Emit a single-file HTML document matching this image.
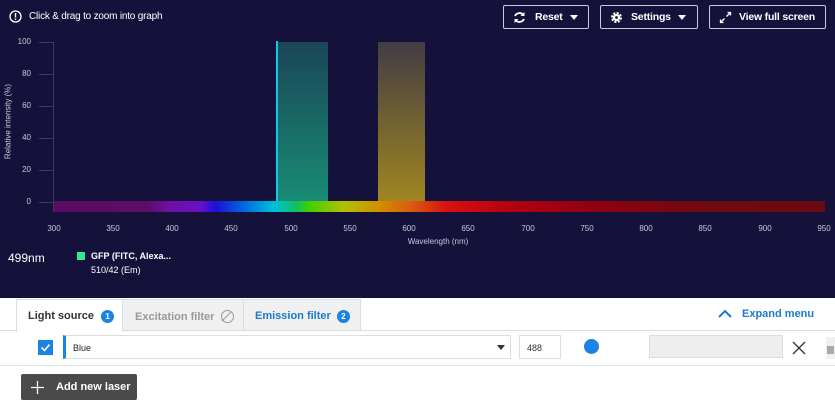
<!DOCTYPE html>
<html><head><style>
*{margin:0;padding:0;box-sizing:border-box}
body{width:835px;height:400px;overflow:hidden;background:#fff;font-family:"Liberation Sans",sans-serif;position:relative}
.dark{position:absolute;left:0;top:0;width:835px;height:298px;background:#14123a}
.abs{position:absolute}
.btn{position:absolute;top:5px;height:24px;border:1px solid #c8c8d8;border-radius:2px;color:#fff;font-size:10.5px;font-weight:bold;display:flex;align-items:center;padding-left:9px;white-space:nowrap;letter-spacing:-0.2px}
.yl{position:absolute;left:0;width:31px;text-align:right;color:#c8c8d8;font-size:8px}
.tick{position:absolute;left:39px;width:14px;height:1px;background:#3a3866}
.xl{position:absolute;top:224px;color:#c8c8d8;font-size:8px;width:30px;text-align:center}
</style></head><body>
<div class="dark"></div>
<svg class="abs" style="left:9px;top:10px" width="13" height="13" viewBox="0 0 13 13"><circle cx="6.5" cy="6.5" r="5.5" fill="none" stroke="#fff" stroke-width="1.3"/><rect x="5.8" y="3" width="1.4" height="4.5" fill="#fff"/><rect x="5.8" y="8.5" width="1.4" height="1.4" fill="#fff"/></svg>
<div class="abs" style="left:29px;top:11px;color:#fff;font-size:10px;letter-spacing:-0.2px">Click &amp; drag to zoom into graph</div>
<div class="btn" style="left:503px;width:86px"><svg width="13" height="13" viewBox="0 0 13 13"><path d="M10.5 4A5 5 0 0 0 2 5M2.5 9A5 5 0 0 0 11 8" fill="none" stroke="#fff" stroke-width="1.8"/><path d="M11.5 1v4h-4zM1.5 12V8h4z" fill="#fff"/></svg><span style="margin-left:9px">Reset</span><span style="margin-left:7px;border-left:4px solid transparent;border-right:4px solid transparent;border-top:5px solid #fff"></span></div>
<div class="btn" style="left:600px;width:98px"><svg width="13" height="13" viewBox="0 0 13 13"><circle cx="6.5" cy="6.5" r="4.2" fill="none" stroke="#fff" stroke-width="2.6" stroke-dasharray="2 1.3"/><circle cx="6.5" cy="6.5" r="3.5" fill="#fff"/><circle cx="6.5" cy="6.5" r="1.4" fill="#14123a"/></svg><span style="margin-left:8px">Settings</span><span style="margin-left:7px;border-left:4px solid transparent;border-right:4px solid transparent;border-top:5px solid #fff"></span></div>
<div class="btn" style="left:709px;width:117px"><svg width="13" height="13" viewBox="0 0 13 13"><path d="M7.5 5.5L11.5 1.5M8.5 1.5h3v3M5.5 7.5L1.5 11.5M1.5 8.5v3h3" fill="none" stroke="#fff" stroke-width="1.3"/></svg><span style="margin-left:7px">View full screen</span></div>

<div class="yl" style="top:37px">100</div><div class="tick" style="top:42px"></div>
<div class="yl" style="top:69px">80</div><div class="tick" style="top:74px"></div>
<div class="yl" style="top:101px">60</div><div class="tick" style="top:106px"></div>
<div class="yl" style="top:133px">40</div><div class="tick" style="top:138px"></div>
<div class="yl" style="top:165px">20</div><div class="tick" style="top:170px"></div>
<div class="yl" style="top:197px">0</div><div class="tick" style="top:202px"></div>
<div class="abs" style="left:53px;top:42px;width:1px;height:170px;background:#3a3866"></div>
<div class="abs" style="left:-42px;top:117px;width:100px;text-align:center;transform:rotate(-90deg);color:#c8c8d8;font-size:8px">Relative intensity (%)</div>

<div class="abs" style="left:54px;top:201px;width:771px;height:11px;background:linear-gradient(90deg,#5c0c62 0%,#5e0c66 12%,#7010a0 15%,#6a10c8 19%,#1a10d8 21%,#0070e0 25%,#00c0d8 28.5%,#10c060 31.5%,#40d000 33%,#b0c000 37.5%,#d09000 42%,#d86010 46%,#d81010 51%,#b00010 60%,#900010 70%,#700a10 85%,#6a0a12 100%)"></div>
<div class="abs" style="left:277px;top:42px;width:51px;height:159px;background:linear-gradient(#1b4558,#188c74)"></div>
<div class="abs" style="left:378px;top:42px;width:47px;height:159px;background:linear-gradient(#433c44,#a08620)"></div>
<div class="abs" style="left:276px;top:41px;width:2px;height:160px;background:#10c8e8"></div>

<div class="xl" style="left:39px">300</div><div class="xl" style="left:98px">350</div><div class="xl" style="left:157px">400</div><div class="xl" style="left:216px">450</div><div class="xl" style="left:276px">500</div><div class="xl" style="left:335px">550</div><div class="xl" style="left:394px">600</div><div class="xl" style="left:453px">650</div><div class="xl" style="left:513px">700</div><div class="xl" style="left:572px">750</div><div class="xl" style="left:631px">800</div><div class="xl" style="left:690px">850</div><div class="xl" style="left:750px">900</div><div class="xl" style="left:809px">950</div>
<div class="abs" style="left:388px;top:237px;width:100px;text-align:center;color:#c8c8d8;font-size:8px">Wavelength (nm)</div>

<div class="abs" style="left:8px;top:251px;color:#fff;font-size:12px">499nm</div>
<div class="abs" style="left:77px;top:252px;width:8px;height:8px;background:#30e890"></div>
<div class="abs" style="left:91px;top:251px;color:#fff;font-size:9px;font-weight:bold">GFP (FITC, Alexa...</div>
<div class="abs" style="left:91px;top:265px;color:#fff;font-size:9px">510/42 (Em)</div>

<div class="abs" style="left:0;top:298px;width:835px;height:33px;border-bottom:1px solid #ddd"></div>
<div class="abs" style="left:16px;top:299px;width:107px;height:33px;background:#fff;border:1px solid #ddd;border-bottom:none;font-size:11px;font-weight:bold;color:#333;padding:10px 0 0 11px">Light source <span style="display:inline-block;width:13px;height:13px;border-radius:50%;background:#1a84e0;color:#fff;font-size:8px;text-align:center;line-height:13px;margin-left:4px">1</span></div>
<div class="abs" style="left:123px;top:299px;width:121px;height:32px;background:#f0f0f0;border:1px solid #ddd;border-left:none;font-size:11px;font-weight:bold;color:#999;padding:10px 0 0 12px">Excitation filter <span style="display:inline-block;width:13px;height:13px;border:1.3px solid #999;border-radius:50%;vertical-align:-3px;margin-left:3px;position:relative"><span style="position:absolute;left:4.5px;top:-1px;width:1.3px;height:13px;background:#999;transform:rotate(45deg)"></span></span></div>
<div class="abs" style="left:244px;top:299px;width:117px;height:32px;background:#f0f0f0;border:1px solid #ddd;border-left:none;font-size:11px;font-weight:bold;color:#1a7ad0;padding:10px 0 0 11px">Emission filter <span style="display:inline-block;width:13px;height:13px;border-radius:50%;background:#1a84e0;color:#fff;font-size:8px;text-align:center;line-height:13px;margin-left:3px">2</span></div>
<svg class="abs" style="left:717px;top:308px" width="16" height="12"><path d="M2 9l6-6 6 6" fill="none" stroke="#1a7ad0" stroke-width="2"/></svg>
<div class="abs" style="left:742px;top:308px;font-size:11px;font-weight:bold;color:#1a7ad0">Expand menu</div>

<div class="abs" style="left:38px;top:340px;width:15px;height:15px;background:#1a84e0"><svg width="15" height="15"><path d="M3.5 7.5l3 3 5-6" fill="none" stroke="#fff" stroke-width="1.6"/></svg></div>
<div class="abs" style="left:63px;top:335px;width:448px;height:24px;border:1px solid #ddd;border-left:3px solid #1a84e0;font-size:9px;color:#222;padding:7px 0 0 7px">Blue</div>
<div class="abs" style="left:497px;top:345px;border-left:4px solid transparent;border-right:4px solid transparent;border-top:5px solid #333"></div>
<div class="abs" style="left:519px;top:335px;width:42px;height:24px;border:1px solid #ddd;font-size:9px;color:#333;padding:7px 0 0 7px">488</div>
<div class="abs" style="left:584px;top:339px;width:15px;height:15px;border-radius:50%;background:#1a84e0"></div>
<div class="abs" style="left:649px;top:335px;width:134px;height:23px;border:1px solid #ddd;background:#eee"></div>
<svg class="abs" style="left:792px;top:341px" width="14" height="14"><path d="M1 1l12 12M13 1L1 13" stroke="#333" stroke-width="1.3"/></svg>
<div class="abs" style="left:826px;top:337px;width:9px;height:22px;background:#f0f0f0"><div style="margin:9px 1px;height:8px;background:#aaa"></div></div>
<div class="abs" style="left:0;top:365px;width:835px;height:1px;background:#e4e4e4"></div>
<div class="abs" style="left:21px;top:374px;width:116px;height:26px;background:#4a4a4a;border-radius:2px;color:#fff;font-size:11px;font-weight:bold;padding:7px 0 0 35px">Add new laser</div>
<svg class="abs" style="left:30px;top:380px" width="15" height="15"><path d="M7.5 1v13M1 7.5h13" stroke="#fff" stroke-width="1.3"/></svg>
</body></html>
